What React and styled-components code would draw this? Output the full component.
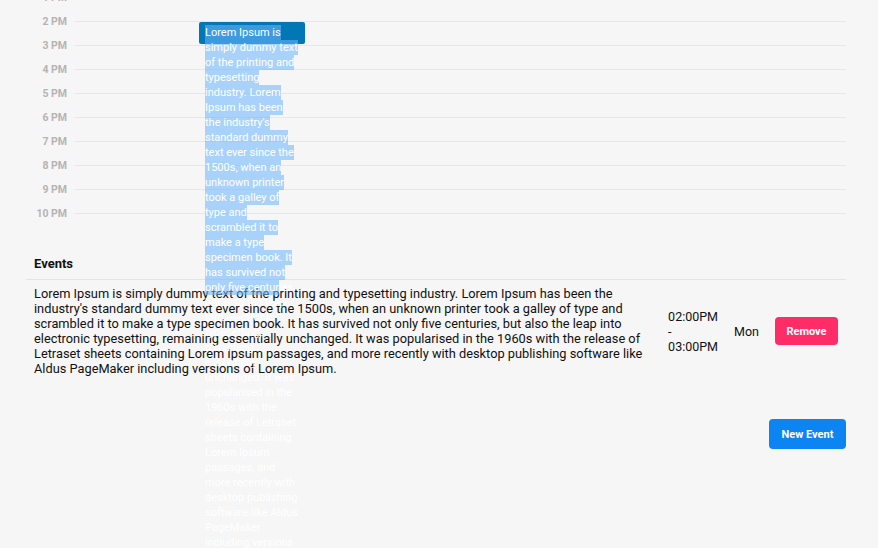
import React from 'react';
import styled, { createGlobalStyle } from 'styled-components';

const GlobalStyle = createGlobalStyle`
  body {
    margin: 0;
    background: #f6f6f6;
    font-family: Roboto, "Liberation Sans", sans-serif;
    color: #111;
  }
`;

const Page = styled.div`
  min-height: 100vh;
  padding: 0 32px 60px 26px;
`;

const Calendar = styled.div`
  position: relative;
  margin-top: -15px;
`;

const HourRow = styled.div`
  display: grid;
  grid-template-columns: 41px 1fr;
  column-gap: 8px;
  align-items: center;
  height: 24px;
`;

const HourLabel = styled.span`
  text-align: right;
  font-size: 10.5px;
  font-weight: 700;
  color: #b4b4b4;
  white-space: nowrap;
`;

const HourLine = styled.div`
  height: 1px;
  background: #e7e7e7;
`;

const EventBlock = styled.div`
  position: absolute;
  left: 173px;
  top: 37px;
  width: 106px;
  height: 22px;
  box-sizing: border-box;
  padding: 3px 6px 0;
  background: #0277b6;
  border-radius: 2px;
  color: #fff;
  font-size: 11px;
  line-height: 15px;
  z-index: 2;
`;

const Picked = styled.span`
  background: rgba(108, 181, 255, 0.56);
  padding: 1px 0;
`;

const EventsTable = styled.div`
  margin-top: 24px;
`;

const HeadRow = styled.div`
  padding: 8px;
  border-bottom: 1px solid #e4e4e4;
  font-size: 13px;
  font-weight: 700;
  line-height: 14px;
`;

const EventRow = styled.div`
  display: flex;
  align-items: center;
`;

const Cell = styled.div`
  padding: 6px 8px;
  font-size: ${p => (p.$grow ? 12.8 : 12.5)}px;
  line-height: 15px;
  flex: ${p => (p.$grow ? 1 : 'none')};
  width: ${p => (p.$narrow ? 'min-content' : 'auto')};
`;

const Button = styled.button`
  border: none;
  border-radius: 4px;
  color: #fff;
  font-family: Roboto, "Liberation Sans", sans-serif;
  font-size: 11px;
  font-weight: 700;
  cursor: pointer;
  background: ${p => p.$bg};
  width: ${p => p.$w}px;
  height: ${p => p.$h}px;
  padding: 0;
`;

const Footer = styled.div`
  display: flex;
  justify-content: flex-end;
  margin-top: 37px;
`;

const hours = ['1 PM', '2 PM', '3 PM', '4 PM', '5 PM', '6 PM', '7 PM', '8 PM', '9 PM', '10 PM'];

const lorem =
  "Lorem Ipsum is simply dummy text of the printing and typesetting industry. Lorem Ipsum has been the industry's standard dummy text ever since the 1500s, when an unknown printer took a galley of type and scrambled it to make a type specimen book. It has survived not only five centuries, but also the leap into electronic typesetting, remaining essentially unchanged. It was popularised in the 1960s with the release of Letraset sheets containing Lorem Ipsum passages, and more recently with desktop publishing software like Aldus PageMaker including versions of Lorem Ipsum.";

const cut = lorem.indexOf('centuries') + 'centur'.length;

export default function App() {
  return (
    <>
      <GlobalStyle />
      <Page>
        <Calendar>
          {hours.map(h => (
            <HourRow key={h}>
              <HourLabel>{h}</HourLabel>
              <HourLine />
            </HourRow>
          ))}
          <EventBlock>
            <Picked>{lorem.slice(0, cut)}</Picked>
            {lorem.slice(cut)}
          </EventBlock>
        </Calendar>

        <EventsTable>
          <HeadRow>Events</HeadRow>
          <EventRow>
            <Cell $grow>{lorem}</Cell>
            <Cell $narrow>02:00PM - 03:00PM</Cell>
            <Cell>Mon</Cell>
            <Cell>
              <Button $bg="#ff2d67" $w={63} $h={28}>Remove</Button>
            </Cell>
          </EventRow>
        </EventsTable>

        <Footer>
          <Button $bg="#0c84f1" $w={77} $h={30}>New Event</Button>
        </Footer>
      </Page>
    </>
  );
}
